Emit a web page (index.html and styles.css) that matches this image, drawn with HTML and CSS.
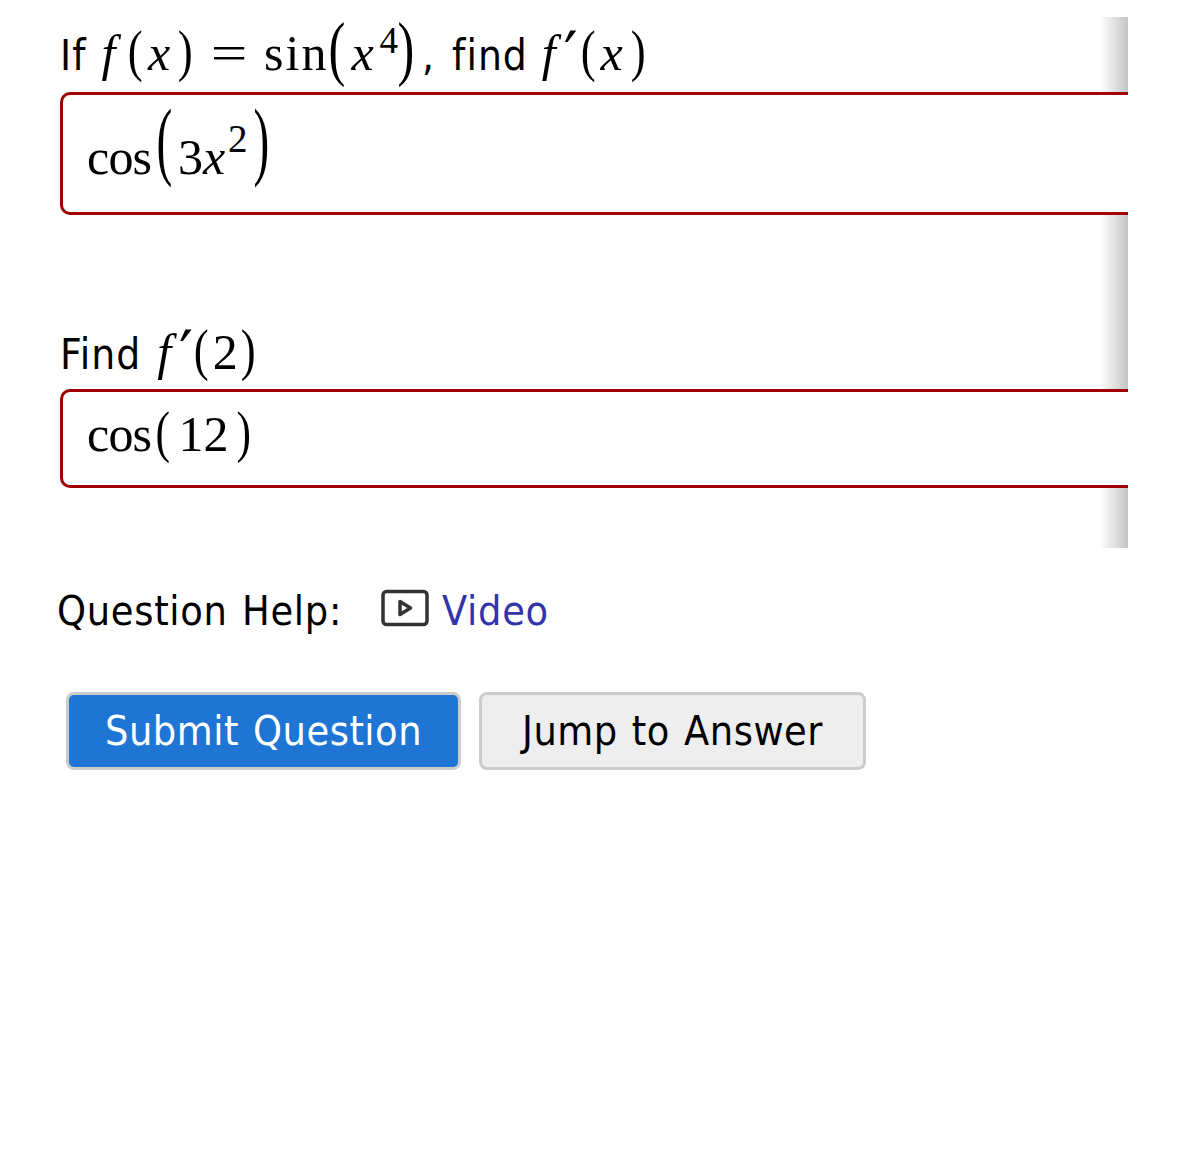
FILE: index.html
```html
<!DOCTYPE html>
<html lang="en">
<head>
<meta charset="utf-8">
<title>Question</title>
<link rel="stylesheet" href="styles.css">
</head>
<body>
<div class="question">
  <div class="label label-one">
    <span class="text">If</span>
    <span class="math gap-a"><i class="fn">f</i><span class="p p-open">(</span><i class="var">x</i><span class="p p-close">)</span><span class="eq">=</span><span class="op">sin</span><span class="paren">(</span><i class="var var-sup">x</i><sup class="sup">4</sup><span class="paren">)</span></span>
    <span class="text comma">, find</span>
    <span class="math gap-b"><i class="fn fn-prime">f</i><span class="prime">′</span><span class="p p-open">(</span><i class="var">x</i><span class="p p-close">)</span></span>
  </div>
  <div class="field field-one">
    <span class="math answer"><span class="op-cos">cos</span><span class="paren-xl">(</span><span class="num">3</span><i class="var-a">x</i><sup class="sup-lg">2</sup><span class="paren-xl">)</span></span>
  </div>
  <div class="label label-two">
    <span class="text">Find</span>
    <span class="math gap-c"><i class="fn fn-prime">f</i><span class="prime prime-tight">′</span><span class="p p-open">(</span><span class="digit">2</span><span class="p p-close">)</span></span>
  </div>
  <div class="field field-two">
    <span class="math answer"><span class="op-cos">cos</span><span class="paren-md">(</span><span class="num">12</span><span class="paren-md paren-md-close">)</span></span>
  </div>
</div>
<div class="help">
  <span class="help-label">Question Help:</span>
  <svg class="video-icon" width="48" height="38" viewBox="0 0 48 38" aria-hidden="true">
    <rect x="2" y="2.5" width="44" height="33" rx="3.5" fill="none" stroke="#333" stroke-width="3.5"/>
    <path d="M19 12.5 L29.5 19 L19 25.5 Z" fill="none" stroke="#333" stroke-width="3.5" stroke-linejoin="round"/>
  </svg>
  <a class="help-link" href="#">Video</a>
</div>
<div class="buttons">
  <button class="btn btn-primary" type="button">Submit Question</button>
  <button class="btn btn-secondary" type="button">Jump to Answer</button>
</div>
</body>
</html>
```
FILE: styles.css
```css
html, body { margin: 0; padding: 0; background: #fff; }
body { font-family: "DejaVu Sans Condensed", "DejaVu Sans", sans-serif; font-stretch: condensed; color: #000; height: 1153px; overflow: hidden; }
.question {
  width: 1128px;
  height: 531px;
  margin-top: 17px;
  overflow: hidden;
  padding-left: 60px;
  box-sizing: border-box;
  background: linear-gradient(to right, rgba(255,255,255,0) 1100px, #c4c4c4 1128px);
}
.label { display: flex; align-items: baseline; white-space: nowrap; height: 75px; line-height: 72px; }
.label-two { height: 72px; line-height: 70px; margin-top: 102px; }
.text { font-size: 42px; letter-spacing: 1px; word-spacing: 4px; }
.math { font-family: "Liberation Serif", "DejaVu Serif", serif; font-size: 50px; }
.gap-a { margin-left: 15px; }
.gap-b { margin-left: 14px; }
.gap-c { margin-left: 16px; }
.eq { display: inline-block; transform: scaleX(1.3); margin: 0 21px 0 20px; }
.op { letter-spacing: 2px; }
.comma { margin-left: 7px; }
.fn { margin-right: 11px; }
.fn-prime { margin-right: 0; }
.var { margin: 0 2px; letter-spacing: 4px; }
.var-sup { margin-left: 5px; }
.var-a { margin: 0; }
.digit { margin: 0 1px; }
.prime { font-family: "DejaVu Sans", sans-serif; font-stretch: normal; font-size: 62px; line-height: 0; margin: 0 1px 0 8px; position: relative; top: 6px; }
.prime-tight { margin-right: -1px; }
.p, .paren, .paren-xl, .paren-md { display: inline-block; line-height: 1; }
.p { font-size: 56px; transform: scaleX(.8); margin-top: -20px; margin-bottom: -20px; }
.p-open { margin-left: 0; margin-right: 1px; }
.p-close { margin-left: 0; margin-right: 0; }
.paren { font-size: 72px; transform: scaleX(.7); margin: -20px -3px; vertical-align: -2px; }
.paren-xl { font-size: 86px; transform: scaleX(.55); margin: 0 -1px; vertical-align: 5px; }
.paren-md { font-size: 58px; transform: scaleX(.75); margin: 0 6px 0 2px; }
.paren-md-close { margin-left: 5px; }
.sup { font-size: 37px; line-height: 0; vertical-align: 17px; margin: 0 -1px 0 0; letter-spacing: 0; }
.sup-lg { font-size: 39px; line-height: 0; vertical-align: 22px; margin-left: 3px; }
.field {
  width: 1300px;
  border: 3px solid #a00000;
  border-radius: 10px;
  background: #fff;
  box-sizing: border-box;
  padding-left: 24px;
  white-space: nowrap;
}
.field-one { height: 123px; line-height: 124px; }
.field-two { height: 99px; line-height: 84px; }
.answer { font-size: 50px; }
.op-cos { letter-spacing: -.8px; }
.help { display: flex; align-items: center; height: 40px; margin: 43px 0 0 57px; font-size: 41px; letter-spacing: .7px; word-spacing: 2px; }
.video-icon { margin: 0 0 6px 39px; flex: none; }
.help-link { color: #3333aa; text-decoration: none; margin-left: 13px; }
.buttons { display: flex; gap: 18px; margin: 61px 0 0 66px; }
.btn {
  height: 78px;
  padding: 0;
  border: 3px solid #cccccc;
  border-radius: 8px;
  background: #eeeeee;
  color: #000;
  font-family: inherit;
  font-stretch: condensed;
  font-size: 41px;
  letter-spacing: .5px;
  word-spacing: 2px;
}
.btn-primary { width: 395px; background: #1e75d4; color: #fff; }
.btn-secondary { width: 387px; }
```
